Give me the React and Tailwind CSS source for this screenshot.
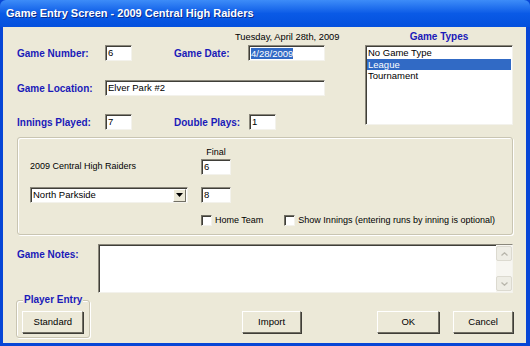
import React from 'react';

const font = { fontFamily: '"Liberation Sans", Arial, sans-serif' };

// sunken text box, XP-ish
function Field({ w, value, selected, className = '' }) {
  return (
    <div
      className={`h-[16px] bg-white border border-t-[#8a877b] border-l-[#8a877b] border-b-[#f3f2ec] border-r-[#f3f2ec] shadow-[inset_1px_1px_0_#3f3e38] flex items-center pl-[2px] text-[9.5px] text-black ${className}`}
      style={{ width: w }}
    >
      {selected ? <span className="bg-[#316ac5] text-white leading-[11px]">{value}</span> : value}
    </div>
  );
}

function Label({ w, children, className = '' }) {
  return (
    <div className={`text-[10px] font-bold text-[#1a1ab8] ${className}`} style={{ width: w }}>
      {children}
    </div>
  );
}

function Btn({ w, children, className = '' }) {
  return (
    <div
      className={`h-[22px] bg-[#ece9d8] border border-t-white border-l-white border-b-[#716f64] border-r-[#716f64] shadow-[1px_1px_0_#3f3e38] flex items-center justify-center text-[9.5px] text-black ${className}`}
      style={{ width: w }}
    >
      {children}
    </div>
  );
}

function Check({ label, className = '' }) {
  return (
    <div className={`flex items-center gap-[3px] text-[9px] text-black ${className}`}>
      <div className="w-[11px] h-[11px] bg-white border border-t-[#716f64] border-l-[#716f64] border-b-[#f3f2ec] border-r-[#f3f2ec] shadow-[inset_1px_1px_0_#3f3e38]" />
      <span>{label}</span>
    </div>
  );
}

export default function App() {
  return (
    <div className="w-[530px] h-[346px] bg-[#0746d6] flex flex-col overflow-hidden" style={font}>
      {/* Title bar */}
      <div className="h-[27px] shrink-0 bg-gradient-to-b from-[#3d8cf8] via-[#0a5ae6] to-[#0450dd] flex items-center pl-[6px] rounded-t-[6px]">
        <span className="text-white font-bold text-[11px] [text-shadow:1px_1px_0_#0a2b8a]">
          Game Entry Screen - 2009 Central High Raiders
        </span>
      </div>

      {/* Body */}
      <div className="flex-1 ml-[3px] mr-[4px] mb-[3px] bg-[#ece9d8] pl-[14px] pr-[13px] flex flex-col">
        {/* Top section */}
        <div className="flex">
          <div className="w-[308px]">
            <div className="h-[18px] pt-[4px] pl-[218px] text-[9.3px] text-black whitespace-nowrap leading-[12px]">
              Tuesday, April 28th, 2009
            </div>
            <div className="flex items-center">
              <Label w={88}>Game Number:</Label>
              <Field w={27} value="6" />
              <Label w={74} className="ml-[42px]">Game Date:</Label>
              <Field w={77} value="4/28/2009" selected />
            </div>
            <div className="flex items-center mt-[19px]">
              <Label w={88}>Game Location:</Label>
              <Field w={220} value="Elver Park #2" />
            </div>
            <div className="flex items-center mt-[18px]">
              <Label w={88}>Innings Played:</Label>
              <Field w={27} value="7" />
              <Label w={75} className="ml-[42px]">Double Plays:</Label>
              <Field w={27} value="1" />
            </div>
          </div>
          <div className="ml-[40px] w-[149px] flex flex-col">
            <div className="h-[18px] pt-[4px] text-center text-[10px] font-bold text-[#1a1ab8] leading-[12px]">Game Types</div>
            <div className="h-[80px] bg-white border border-t-[#8a877b] border-l-[#8a877b] border-b-[#f3f2ec] border-r-[#f3f2ec] shadow-[inset_1px_1px_0_#3f3e38] pt-[1px] pl-[1px] pr-[1px] text-[9.5px] leading-[11.5px] text-black">
              <div className="pl-[1px]">No Game Type</div>
              <div className="pl-[1px] bg-[#316ac5] text-white">League</div>
              <div className="pl-[1px]">Tournament</div>
            </div>
          </div>
        </div>

        {/* Score group */}
        <div className="mt-[7px] h-[98px] w-[496px] border border-[#c9c5b2] rounded-[3px] shadow-[inset_1px_1px_0_#fff,1px_1px_0_#fff] pl-[12px] flex flex-col">
          <div className="pl-[171px] pt-[8px] h-[21px] leading-[12px] text-[9px] text-black">
            <div className="w-[30px] text-center">Final</div>
          </div>
          <div className="flex items-center">
            <div className="w-[171px] text-[9px] text-black">2009 Central High Raiders</div>
            <Field w={30} value="6" />
          </div>
          <div className="flex items-center mt-[12px]">
            <div className="w-[158px] h-[16px] bg-white border border-t-[#8a877b] border-l-[#8a877b] border-b-[#f3f2ec] border-r-[#f3f2ec] shadow-[inset_1px_1px_0_#3f3e38] flex items-center pl-[2px] text-[9.5px] text-black">
              <span className="flex-1">North Parkside</span>
              <div className="w-[13px] h-[13px] mr-[1px] bg-[#ece9d8] border border-t-white border-l-white border-b-[#716f64] border-r-[#716f64] flex items-center justify-center">
                <svg width="7" height="4" viewBox="0 0 7 4"><path d="M0 0h7L3.5 4z" fill="#000" /></svg>
              </div>
            </div>
            <Field w={30} value="8" className="ml-[13px]" />
          </div>
          <div className="flex items-center mt-[11px]">
            <Check label="Home Team" className="ml-[171px]" />
            <Check label="Show Innings (entering runs by inning is optional)" className="ml-[21px]" />
          </div>
        </div>

        {/* Notes */}
        <div className="flex mt-[9px]">
          <Label w={81} className="pt-[3px]">Game Notes:</Label>
          <div className="w-[416px] h-[49px] bg-white border border-t-[#8a877b] border-l-[#8a877b] border-b-[#f3f2ec] border-r-[#f3f2ec] shadow-[inset_1px_1px_0_#3f3e38] flex justify-end">
            <div className="w-[16px] h-full bg-[#f7f6f1] flex flex-col justify-between py-[1px]">
              <div className="h-[15px] bg-[#eeede5] border border-[#dcdad0] rounded-[2px] flex items-center justify-center">
                <svg width="7" height="4" viewBox="0 0 7 4"><path d="M0.5 3.5L3.5 0.8L6.5 3.5" stroke="#b8b6ac" strokeWidth="1.3" fill="none" /></svg>
              </div>
              <div className="h-[15px] bg-[#eeede5] border border-[#dcdad0] rounded-[2px] flex items-center justify-center">
                <svg width="7" height="4" viewBox="0 0 7 4"><path d="M0.5 0.5L3.5 3.2L6.5 0.5" stroke="#b8b6ac" strokeWidth="1.3" fill="none" /></svg>
              </div>
            </div>
          </div>
        </div>

        {/* Bottom buttons */}
        <div className="flex items-end mt-[7px]">
          <div className="relative w-[74px] h-[38px] -ml-[1px] border border-[#c9c5b2] rounded-[3px] shadow-[inset_1px_1px_0_#fff,1px_1px_0_#fff] flex items-end justify-center pb-[4px]">
            <div className="absolute -top-[7px] left-[6px] px-[1px] bg-[#ece9d8] text-[10px] font-bold text-[#1a1ab8] leading-[12px]">
              Player Entry
            </div>
            <Btn w={61}>Standard</Btn>
          </div>
          <Btn w={60} className="ml-[152px] mb-[5px]">Import</Btn>
          <Btn w={62} className="ml-[76px] mb-[5px]">OK</Btn>
          <Btn w={60} className="ml-[14px] mb-[5px]">Cancel</Btn>
        </div>
      </div>
    </div>
  );
}
